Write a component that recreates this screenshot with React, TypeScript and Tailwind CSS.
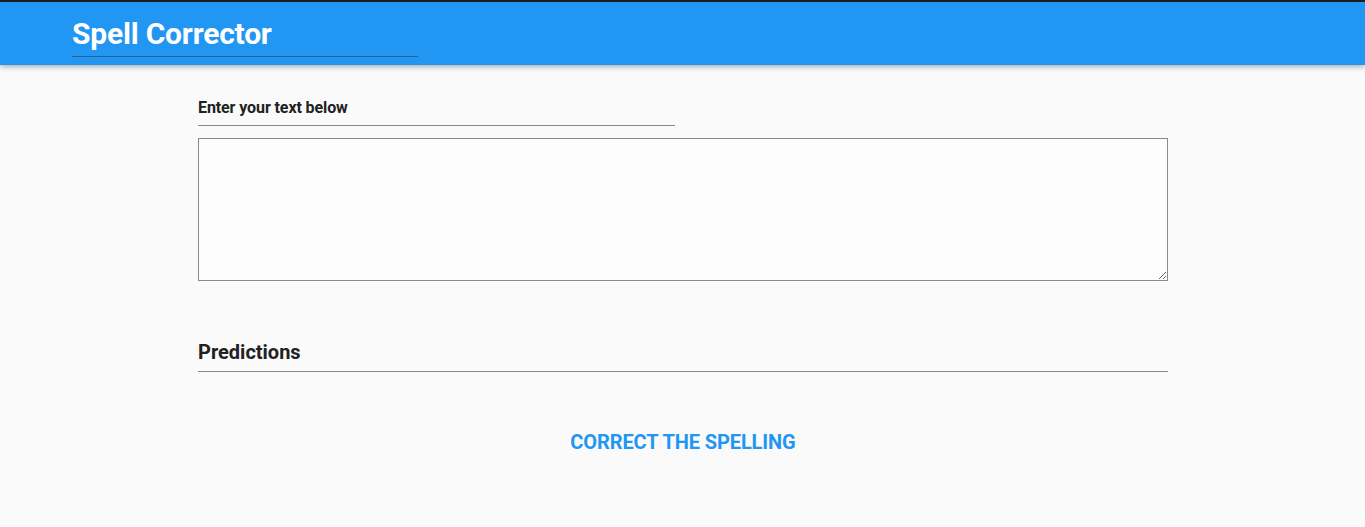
import React from "react";

export default function App() {
  return (
    <div className="min-h-[527px] bg-[#fafafa] font-['Roboto',sans-serif]">
      <header className="border-t-2 border-[#1c1c1c] bg-[#2196f3] shadow-[0_2px_5px_rgba(0,0,0,0.3)] h-[65px]">
        <div className="ml-[72px] w-[346px] pt-[14px] border-b border-[#2d5f8e] h-[55px]">
          <h1 className="text-[30px] leading-[36px] font-bold text-white tracking-[-0.2px]">Spell Corrector</h1>
        </div>
      </header>
      <main className="w-[970px] ml-[198px] pt-[33px]">
        <div className="w-[477px] border-b border-[#8a8a8a] pb-[8px]">
          <label className="block text-[16px] leading-[19px] font-bold text-[#212121] tracking-[-0.1px]">Enter your text below</label>
        </div>
        <textarea className="mt-[12px] block w-[970px] h-[143px] border border-[#8a8a8a] bg-[#fdfdfd] outline-none resize-y p-1" />
        <div className="mt-[59px] border-b border-[#8a8a8a] pb-[7px]">
          <h2 className="text-[20px] leading-[24px] font-bold text-[#212121]">Predictions</h2>
        </div>
        <div className="flex justify-center mt-[58px]">
          <button className="text-[20px] leading-[24px] font-bold text-[#2196f3] uppercase tracking-[-0.1px]">Correct the spelling</button>
        </div>
      </main>
    </div>
  );
}
